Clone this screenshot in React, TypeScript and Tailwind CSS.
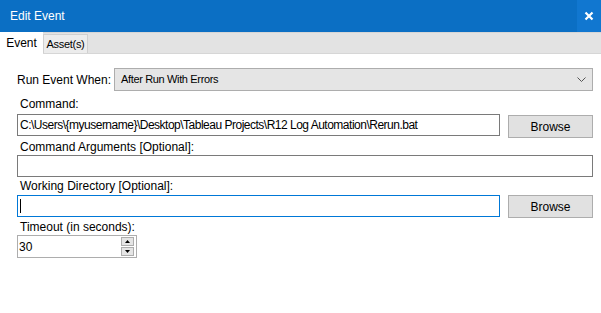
import React from "react";

const ui = { fontFamily: '"Liberation Sans", Arial, sans-serif' };

function Browse() {
  return (
    <div className="flex h-[23px] w-[85px] shrink-0 items-center justify-center border border-[#adadad] bg-[#e1e1e1] text-[12px] text-black">
      Browse
    </div>
  );
}

export default function App() {
  return (
    <div className="h-[313px] w-[601px] overflow-hidden bg-white" style={ui}>
      {/* Title bar */}
      <div className="flex h-[32px] items-center bg-[#0b6fc4]">
        <div className="flex-1 pl-[10px] text-[12px] text-white">Edit Event</div>
        <div className="flex h-[32px] w-[24px] items-center justify-center bg-[#1177d0]">
          <svg width="10" height="10" viewBox="0 0 10 10">
            <path d="M1.5 1.5 L8.5 8.5 M8.5 1.5 L1.5 8.5" stroke="white" strokeWidth="2.2" />
          </svg>
        </div>
      </div>
      {/* Tabs */}
      <div className="flex h-[22px] items-end border-t border-b border-[#d6d6d6] bg-[#e3e3e3]">
        <div className="-mb-px flex h-[22px] w-[43px] items-center justify-center bg-white text-[12px] text-black">
          Event
        </div>
        <div className="mb-0 flex h-[19px] w-[45px] items-center justify-center border-l border-r border-t border-[#d0d0d0] bg-[#ececec] text-[11px] tracking-[-0.3px] text-black">
          Asset(s)
        </div>
      </div>
      {/* Content */}
      <div className="flex flex-col pl-[17px] pr-[8px] text-[12px] text-black">
        <div className="mt-[14px] flex h-[23px] items-center">
          <div className="w-[97px] shrink-0">Run Event When:</div>
          <div className="flex h-[23px] flex-1 items-center justify-between border border-[#adadad] bg-[#e5e5e5] pl-[6px] pr-[6px] text-[11px] tracking-[-0.35px]">
            <span>After Run With Errors</span>
            <svg width="9" height="6" viewBox="0 0 9 6">
              <path d="M0.5 0.5 L4.5 4.5 L8.5 0.5" stroke="#555" strokeWidth="1" fill="none" />
            </svg>
          </div>
        </div>
        <div className="mt-[6px] h-[14px] pl-[3px] leading-[14px]">Command:</div>
        <div className="mt-[3px] flex items-start gap-[8px]">
          <div className="flex h-[22px] flex-1 items-center overflow-hidden whitespace-nowrap border border-[#7a7a7a] pl-[2px] text-[12px] tracking-[-0.5px]">
            C:\Users\{"{"}myusername{"}"}\Desktop\Tableau Projects\R12 Log Automation\Rerun.bat
          </div>
          <div className="mt-px">
            <Browse />
          </div>
        </div>
        <div className="mt-[2px] h-[14px] pl-[3px] leading-[14px]">Command Arguments [Optional]:</div>
        <div className="mt-[1px] h-[22px] border border-[#7a7a7a]" />
        <div className="mt-[2px] h-[14px] pl-[3px] leading-[14px]">Working Directory [Optional]:</div>
        <div className="mt-[2px] flex items-start gap-[8px]">
          <div className="flex h-[22px] flex-1 items-center border border-[#0078d7] pl-[2px]">
            <div className="h-[14px] w-px bg-black" />
          </div>
          <Browse />
        </div>
        <div className="mt-[2px] h-[14px] pl-[3px] leading-[14px]">Timeout (in seconds):</div>
        <div className="mt-[1px] flex h-[23px] w-[120px] items-center border border-[#adadad] pl-[1px] pr-[2px]">
          <span className="flex-1">30</span>
          <div className="flex flex-col gap-px">
            <div className="flex h-[9px] w-[13px] items-center justify-center border border-[#adadad] bg-[#e5e5e5]">
              <svg width="5" height="3" viewBox="0 0 5 3"><path d="M0 3 L2.5 0 L5 3Z" fill="#000" /></svg>
            </div>
            <div className="flex h-[9px] w-[13px] items-center justify-center border border-[#adadad] bg-[#e5e5e5]">
              <svg width="5" height="3" viewBox="0 0 5 3"><path d="M0 0 L2.5 3 L5 0Z" fill="#000" /></svg>
            </div>
          </div>
        </div>
      </div>
    </div>
  );
}
